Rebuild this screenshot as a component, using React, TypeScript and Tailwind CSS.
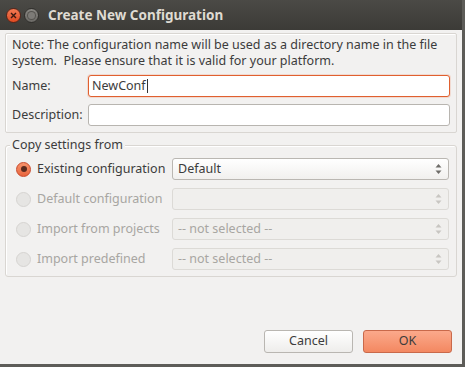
import React from "react";

const font = { fontFamily: '"Noto Sans", "Open Sans", sans-serif' };

function Radio({ checked, disabled }: { checked?: boolean; disabled?: boolean }) {
  if (checked) {
    return (
      <span className="flex h-[15px] w-[15px] items-center justify-center rounded-full border border-[#c9482a] bg-gradient-to-b from-[#f7936c] to-[#e8643c]">
        <span className="h-[6px] w-[6px] rounded-full bg-[#5a2a1e]" />
      </span>
    );
  }
  return (
    <span
      className={
        "h-[15px] w-[15px] rounded-full border " +
        (disabled ? "border-[#d6d4d1] bg-[#e6e5e3]" : "border-[#a9a7a3] bg-white")
      }
    />
  );
}

function Select({ value, disabled }: { value?: string; disabled?: boolean }) {
  return (
    <div
      className={
        "flex h-[22px] flex-1 items-center justify-between rounded-[3px] border pl-[5px] pr-[6px] text-[12.5px] " +
        (disabled
          ? "border-[#dcdad6] bg-[#f0efed] text-[#a8a6a2]"
          : "border-[#bab7b2] bg-gradient-to-b from-white to-[#f1f0ee] text-[#3c3c3c]")
      }
    >
      <span>{value}</span>
      <svg width="7" height="12" viewBox="0 0 7 12">
        <path d="M3.5 1 L6.5 4.5 H0.5 Z" fill={disabled ? "#c8c6c2" : "#6e6c68"} />
        <path d="M3.5 11 L6.5 7.5 H0.5 Z" fill={disabled ? "#c8c6c2" : "#6e6c68"} />
      </svg>
    </div>
  );
}

function Row({
  label,
  value,
  checked,
  disabled,
}: {
  label: string;
  value?: string;
  checked?: boolean;
  disabled?: boolean;
}) {
  return (
    <div className="flex h-[22px] items-center">
      <div className="flex w-[166px] items-center gap-[6px] pl-[10px]">
        <Radio checked={checked} disabled={disabled} />
        <span className={"text-[12.5px] " + (disabled ? "text-[#a8a6a2]" : "text-[#3c3c3c]")}>{label}</span>
      </div>
      <Select value={value} disabled={disabled} />
    </div>
  );
}

export default function App() {
  return (
    <div className="h-[367px] w-[465px] overflow-hidden bg-[#5d5c58]" style={font}>
      <div className="flex h-[364px] w-[462px] flex-col bg-[#f2f1f0]">
        {/* title bar */}
        <div className="flex h-[30px] items-center bg-gradient-to-b from-[#4b4a46] to-[#3c3b37] pl-[6px]">
          <span className="flex h-[15px] w-[15px] items-center justify-center rounded-full border border-[#5a2418] bg-gradient-to-b from-[#f37a53] to-[#df4a20]">
            <svg width="7" height="7" viewBox="0 0 7 7">
              <path d="M1 1 L6 6 M6 1 L1 6" stroke="#3a1a12" strokeWidth="1.4" />
            </svg>
          </span>
          <span className="ml-[3px] flex h-[15px] w-[15px] items-center justify-center rounded-full border border-[#2f2e2b] bg-gradient-to-b from-[#8a8883] to-[#6b6965]">
            <span className="h-[7px] w-[7px] rounded-full bg-[#7d7b77] ring-1 ring-[#55534f]" />
          </span>
          <span className="ml-[9px] text-[13.5px] font-bold text-[#dfdbd2]">Create New Configuration</span>
        </div>

        {/* top panel */}
        <div className="mx-[5px] mt-[3px] rounded-[2px] border border-[#d9d6d2] px-[6px] pb-[6px] pt-[3px] shadow-[inset_1px_1px_0_#ffffff]">
          <p className="text-[12.5px] leading-[16px] text-[#3c3c3c]">
            Note: The configuration name will be used as a directory name in the file system.&nbsp; Please ensure that it is
            valid for your platform.
          </p>
          <div className="mt-[6px] flex items-center">
            <span className="w-[76px] text-[12.5px] text-[#3c3c3c]">Name:</span>
            <div className="flex h-[22px] flex-1 items-center rounded-[3px] border border-[#e0602f] bg-white pl-[3px] text-[12.5px] text-[#3c3c3c] shadow-[0_0_0_1px_rgba(233,84,32,0.15)]">
              NewConf
              <span className="ml-[1px] h-[14px] w-[1px] bg-[#333]" />
            </div>
          </div>
          <div className="mt-[7px] flex items-center">
            <span className="w-[76px] text-[12.5px] text-[#3c3c3c]">Description:</span>
            <div className="h-[22px] flex-1 rounded-[3px] border border-[#b8b5b0] bg-white" />
          </div>
        </div>

        {/* copy settings group */}
        <div className="relative mx-[5px] mt-[12px] flex flex-col gap-[8px] rounded-[3px] border border-[#d9d6d2] pb-[6px] pr-[7px] pt-[12px] shadow-[inset_1px_1px_0_#ffffff]">
          <span className="absolute -top-[10px] left-[4px] bg-[#f2f1f0] px-[2px] text-[12.5px] text-[#3c3c3c]">
            Copy settings from
          </span>
          <Row label="Existing configuration" value="Default" checked />
          <Row label="Default configuration" disabled />
          <Row label="Import from projects" value="-- not selected --" disabled />
          <Row label="Import predefined" value="-- not selected --" disabled />
        </div>

        <div className="flex-1" />

        {/* buttons */}
        <div className="mb-[11px] flex justify-end gap-[10px] pr-[10px]">
          <button className="h-[23px] w-[89px] rounded-[3px] border border-[#b9b6b1] bg-gradient-to-b from-white to-[#eeedeb] text-[12.5px] text-[#3c3c3c]">
            Cancel
          </button>
          <button className="h-[23px] w-[89px] rounded-[3px] border border-[#c9694a] bg-gradient-to-b from-[#fba98b] to-[#f38861] text-[12.5px] text-[#3c3c3c]">
            OK
          </button>
        </div>
      </div>
    </div>
  );
}
